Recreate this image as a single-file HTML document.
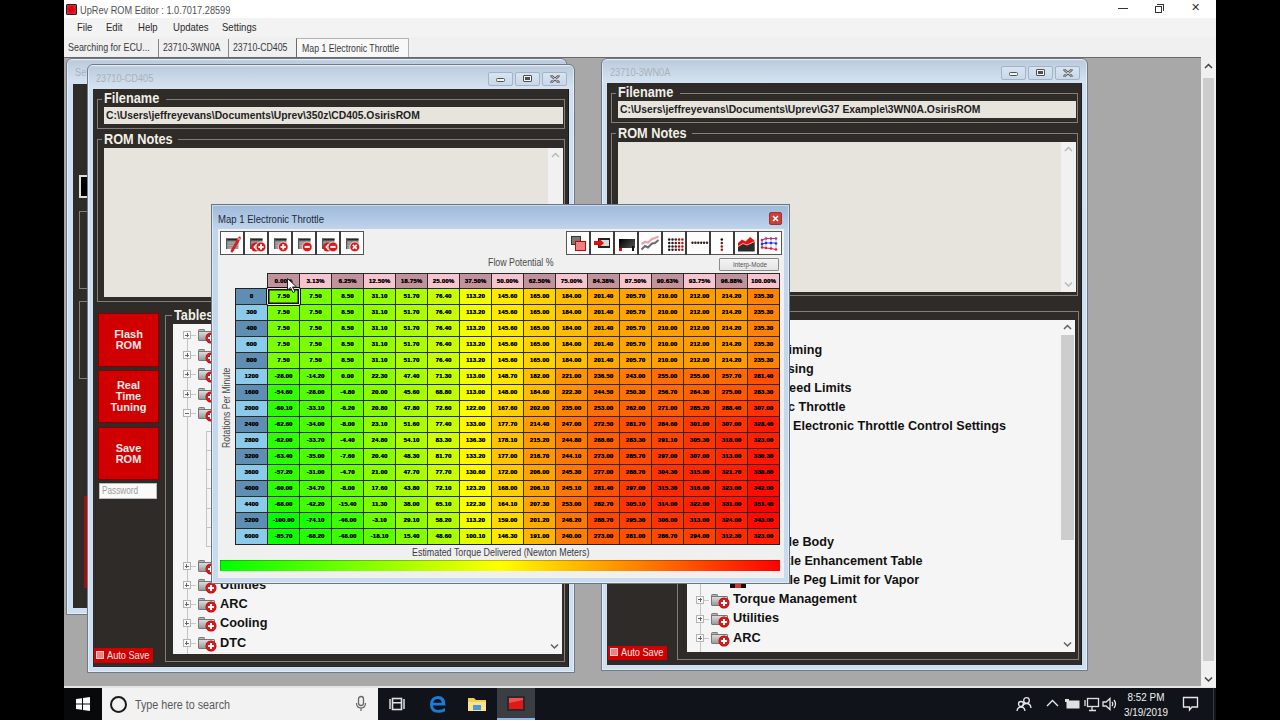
<!DOCTYPE html><html><head><meta charset="utf-8"><style>
*{margin:0;padding:0;box-sizing:border-box}
html,body{width:1280px;height:720px;overflow:hidden;background:#000;font-family:"Liberation Sans",sans-serif}
div{position:absolute}
.t{white-space:nowrap;line-height:1}
svg{display:block;position:absolute;left:0;top:0}
.c{width:33px;height:17px;border:1px solid #2a2a2a;font-size:6px;letter-spacing:.2px;font-weight:bold;color:#000;text-align:center;line-height:15px;white-space:nowrap;text-shadow:.3px 0 0 #000}
</style></head><body><div style="left:64px;top:0px;width:1152px;height:18px;background:#fff"></div>
<div style="left:64px;top:18px;width:1152px;height:19px;background:#f3f3f3"></div>
<div style="left:64px;top:37px;width:1152px;height:20px;background:#f0f0f0"></div>
<div style="left:66px;top:4px;width:11px;height:11px;background:radial-gradient(#e00010 30%,#d04050 100%);border:1.5px solid #222;border-radius:1px"></div>
<div class="t" style="left:80px;top:4.5px;font-size:11.5px;color:#505050;transform:scaleX(.80);transform-origin:0 0">UpRev ROM Editor : 1.0.7017.28599</div>
<div style="left:1118px;top:8px;width:10px;height:1px;background:#333"></div>
<div style="left:1155px;top:6px;width:7px;height:7px;border:1px solid #333"></div>
<div style="left:1157px;top:4px;width:7px;height:7px;border-top:1px solid #333;border-right:1px solid #333"></div>
<div class="t" style="left:1191px;top:2px;font-size:11px;color:#333">&#x2715;</div>
<div class="t" style="left:76.5px;top:22px;font-size:11.5px;color:#2a2a2a;transform:scaleX(.83);transform-origin:0 0">File</div>
<div class="t" style="left:106px;top:22px;font-size:11.5px;color:#2a2a2a;transform:scaleX(.83);transform-origin:0 0">Edit</div>
<div class="t" style="left:137.5px;top:22px;font-size:11.5px;color:#2a2a2a;transform:scaleX(.83);transform-origin:0 0">Help</div>
<div class="t" style="left:172.5px;top:22px;font-size:11.5px;color:#2a2a2a;transform:scaleX(.83);transform-origin:0 0">Updates</div>
<div class="t" style="left:222px;top:22px;font-size:11.5px;color:#2a2a2a;transform:scaleX(.83);transform-origin:0 0">Settings</div>
<div class="t" style="left:68px;top:42px;font-size:11.5px;color:#3a3a3a;transform:scaleX(.775);transform-origin:0 0">Searching for ECU...</div>
<div style="left:158px;top:39px;width:1px;height:18px;background:#888"></div>
<div class="t" style="left:162.5px;top:42px;font-size:11.5px;color:#3a3a3a;transform:scaleX(.76);transform-origin:0 0">23710-3WN0A</div>
<div style="left:228px;top:39px;width:1px;height:18px;background:#888"></div>
<div class="t" style="left:232.5px;top:42px;font-size:11.5px;color:#3a3a3a;transform:scaleX(.76);transform-origin:0 0">23710-CD405</div>
<div style="left:296px;top:37.5px;width:113px;height:20px;background:#f8f8f8;border:1px solid #b4b4b4;border-left:1.5px solid #6a6a6a;border-bottom:none"></div>
<div class="t" style="left:302px;top:43px;font-size:11.5px;color:#3a3a3a;transform:scaleX(.76);transform-origin:0 0">Map 1 Electronic Throttle</div>
<div style="left:64px;top:57px;width:1137px;height:630px;background:#a8a8a8;border-top:1px solid #6a6a6a"></div>
<div style="left:64px;top:687px;width:1152px;height:1px;background:#e8e8e8"></div>
<div style="left:1201px;top:57px;width:15px;height:630px;background:#f0f0f0"></div>
<div style="left:1203px;top:78px;width:11px;height:583px;background:#cdcdcd"></div>
<div style="left:1204px;top:63px;width:9px;height:7px"><svg width="9" height="7"><polyline points="1,5 4.5,1.5 8,5" fill="none" stroke="#404040" stroke-width="1.5"/></svg></div>
<div style="left:1204px;top:676px;width:9px;height:7px"><svg width="9" height="7"><polyline points="1,1.5 4.5,5 8,1.5" fill="none" stroke="#404040" stroke-width="1.5"/></svg></div>
<div style="left:66px;top:58px;width:501px;height:557px;background:linear-gradient(to bottom,#dbe4ee 0px,#bccbdd 2px,#c6d5e6 10px,#d5e3f1 24px,#cee0f1 26px,#cddff1 100%);border:1px solid #6e7a88;border-radius:6px 6px 0 0;box-shadow:inset 0 0 0 1px rgba(255,255,255,.45)"></div>
<div class="t" style="left:75px;top:68px;font-size:10px;color:#a9b1ba;transform:scaleX(.92);transform-origin:0 0">Se</div>
<div style="left:73px;top:84px;width:486px;height:524px;background:#2e2b28"></div>
<div style="left:79px;top:175px;width:20px;height:23px;background:#000;border:2px solid #ddd"></div>
<div style="left:79px;top:211px;width:30px;height:78px;border:1px solid #847e77"></div>
<div style="left:79px;top:301px;width:30px;height:78px;border:1px solid #847e77"></div>
<div style="left:84px;top:496px;width:4px;height:92px;background:#a01010"></div>
<div style="left:87px;top:64px;width:488px;height:609px;background:linear-gradient(to bottom,#dbe4ee 0px,#bccbdd 2px,#c6d5e6 10px,#d5e3f1 24px,#cee0f1 26px,#cddff1 100%);border:1px solid #6e7a88;border-radius:6px 6px 0 0;box-shadow:inset 0 0 0 1px rgba(255,255,255,.45)"></div>
<div class="t" style="left:96px;top:74px;font-size:10px;color:#a9b1ba;transform:scaleX(.92);transform-origin:0 0">23710-CD405</div>
<div style="left:488px;top:72px;width:25px;height:14px;border:1px solid #a4b4c6;border-radius:2px;background:linear-gradient(#d8e4f0,#c8d8ea)"></div>
<div style="left:515px;top:72px;width:25px;height:14px;border:1px solid #a4b4c6;border-radius:2px;background:linear-gradient(#d8e4f0,#c8d8ea)"></div>
<div style="left:542px;top:72px;width:25px;height:14px;border:1px solid #a4b4c6;border-radius:2px;background:linear-gradient(#d8e4f0,#c8d8ea)"></div>
<div style="left:496px;top:77.5px;width:9px;height:4.5px;border:1px solid #505050;border-radius:1.5px;background:#f4f4f4"></div>
<div style="left:523px;top:75px;width:9px;height:7px;border:1px solid #505050;border-radius:1px;background:#f4f4f4"></div>
<div style="left:525px;top:77px;width:5px;height:3px;background:#505050"></div>
<div style="left:549.5px;top:74.5px;width:10px;height:8px"><svg width="10" height="8"><path d="M1.5,1 L8.5,7 M8.5,1 L1.5,7" stroke="#5a5a5a" stroke-width="2.4" stroke-linecap="round"/><path d="M1.5,1 L8.5,7 M8.5,1 L1.5,7" stroke="#eeeeee" stroke-width="0.8" stroke-linecap="round"/></svg></div>
<div style="left:93px;top:89px;width:476px;height:578px;background:#2e2b28;border-right:1px solid #1c1a18"></div>
<div style="left:97px;top:99px;width:468px;height:30px;border:1px solid #847e77"></div>
<div style="left:102px;top:91px;width:64px;height:14px;background:#2e2b28"></div>
<div class="t" style="left:104px;top:91px;font-size:14px;font-weight:bold;color:#f2efe6;transform:scaleX(.91);transform-origin:0 0">Filename</div>
<div style="left:104px;top:107px;width:459px;height:17px;background:#e6e4dc"></div>
<div class="t" style="left:106px;top:110px;font-size:11px;font-weight:bold;color:#222;transform:scaleX(.94);transform-origin:0 0">C:\Users\jeffreyevans\Documents\Uprev\350z\CD405.OsirisROM</div>
<div style="left:97px;top:139px;width:468px;height:163px;border:1px solid #847e77"></div>
<div style="left:102px;top:131px;width:76px;height:14px;background:#2e2b28"></div>
<div class="t" style="left:104px;top:132px;font-size:14px;font-weight:bold;color:#f2efe6;transform:scaleX(.91);transform-origin:0 0">ROM Notes</div>
<div style="left:104px;top:148px;width:459px;height:149px;background:#e6e4dc"></div>
<div style="left:548px;top:148px;width:15px;height:149px;background:#f1f1f1"></div>
<div style="left:551px;top:152px;width:9px;height:7px"><svg width="9" height="7"><polyline points="1,5 4.5,1.5 8,5" fill="none" stroke="#b8b8b8" stroke-width="1.5"/></svg></div>
<div style="left:551px;top:286px;width:9px;height:7px"><svg width="9" height="7"><polyline points="1,1.5 4.5,5 8,1.5" fill="none" stroke="#b8b8b8" stroke-width="1.5"/></svg></div>
<div style="left:98px;top:313px;width:61px;height:54px;background:#d10000;border:1px solid #8a0000"></div>
<div class="t" style="left:98px;top:329.0px;width:61px;text-align:center;font-size:11px;font-weight:bold;color:#f4e8e8">Flash</div>
<div class="t" style="left:98px;top:340.0px;width:61px;text-align:center;font-size:11px;font-weight:bold;color:#f4e8e8">ROM</div>
<div style="left:98px;top:370px;width:61px;height:53px;background:#d10000;border:1px solid #8a0000"></div>
<div class="t" style="left:98px;top:380.0px;width:61px;text-align:center;font-size:11px;font-weight:bold;color:#f4e8e8">Real</div>
<div class="t" style="left:98px;top:391.0px;width:61px;text-align:center;font-size:11px;font-weight:bold;color:#f4e8e8">Time</div>
<div class="t" style="left:98px;top:402.0px;width:61px;text-align:center;font-size:11px;font-weight:bold;color:#f4e8e8">Tuning</div>
<div style="left:98px;top:427px;width:61px;height:53px;background:#d10000;border:1px solid #8a0000"></div>
<div class="t" style="left:98px;top:442.5px;width:61px;text-align:center;font-size:11px;font-weight:bold;color:#f4e8e8">Save</div>
<div class="t" style="left:98px;top:453.5px;width:61px;text-align:center;font-size:11px;font-weight:bold;color:#f4e8e8">ROM</div>
<div style="left:99px;top:483px;width:58px;height:16px;background:#fafafa;border:1px solid #bbb"></div>
<div class="t" style="left:102px;top:486px;font-size:10px;color:#9a9a9a;transform:scaleX(.82);transform-origin:0 0">Password</div>
<div style="left:94px;top:648px;width:59px;height:15px;background:#d10000"></div>
<div style="left:96px;top:651px;width:8px;height:8px;background:#f08080;border:1px solid #fcc"></div>
<div class="t" style="left:107px;top:649.5px;font-size:11.5px;color:#f6e6e6;transform:scaleX(.80);transform-origin:0 0">Auto Save</div>
<div style="left:165px;top:315px;width:400px;height:347px;border:1px solid #847e77"></div>
<div style="left:172px;top:307px;width:48px;height:14px;background:#2e2b28"></div>
<div class="t" style="left:174px;top:308px;font-size:14px;font-weight:bold;color:#f2efe6;transform:scaleX(.91);transform-origin:0 0">Tables</div>
<div style="left:173px;top:324px;width:388px;height:330px;background:#f5f5f5"></div>
<div style="left:547px;top:324px;width:15px;height:330px;background:#f5f5f5"></div>
<div style="left:550px;top:328px;width:9px;height:7px"><svg width="9" height="7"><polyline points="1,5 4.5,1.5 8,5" fill="none" stroke="#606060" stroke-width="1.5"/></svg></div>
<div style="left:550px;top:643px;width:9px;height:7px"><svg width="9" height="7"><polyline points="1,1.5 4.5,5 8,1.5" fill="none" stroke="#606060" stroke-width="1.5"/></svg></div>
<div style="left:187px;top:335px;width:1px;height:319px;background:#c4c4c4"></div>
<div style="left:206px;top:431px;width:1px;height:116px;background:#c4c4c4"></div>
<div style="left:206px;top:431px;width:7px;height:1px;background:#c4c4c4"></div>
<div style="left:206px;top:450px;width:7px;height:1px;background:#c4c4c4"></div>
<div style="left:206px;top:469px;width:7px;height:1px;background:#c4c4c4"></div>
<div style="left:206px;top:488px;width:7px;height:1px;background:#c4c4c4"></div>
<div style="left:206px;top:508px;width:7px;height:1px;background:#c4c4c4"></div>
<div style="left:206px;top:527px;width:7px;height:1px;background:#c4c4c4"></div>
<div style="left:206px;top:546px;width:7px;height:1px;background:#c4c4c4"></div>
<div style="left:183px;top:331px;width:8px;height:8px;border:1px solid #b4b4b4;background:#f8f8f8"></div>
<div style="left:185px;top:334.5px;width:4px;height:1px;background:#666"></div>
<div style="left:186.5px;top:333px;width:1px;height:4px;background:#666"></div>
<div style="left:191px;top:335px;width:5px;height:1px;background:#c8c8c8"></div>
<div style="left:198px;top:329px;width:7px;height:3px;background:#b8b8b8;border:1px solid #7a7a7a;border-bottom:none;border-radius:2px 2px 0 0"></div>
<div style="left:198px;top:331px;width:17px;height:10px;background:linear-gradient(#dcdcdc,#9a9a9a);border:1px solid #777;border-radius:1px"></div>
<div style="left:206px;top:333px;width:10px;height:10px;background:#d81c1c;border-radius:50%;box-shadow:0 0 0 .5px #a00"></div>
<div style="left:210px;top:335px;width:2px;height:6px;background:#fff"></div>
<div style="left:208px;top:337px;width:6px;height:2px;background:#fff"></div>
<div style="left:183px;top:351px;width:8px;height:8px;border:1px solid #b4b4b4;background:#f8f8f8"></div>
<div style="left:185px;top:354.5px;width:4px;height:1px;background:#666"></div>
<div style="left:186.5px;top:353px;width:1px;height:4px;background:#666"></div>
<div style="left:191px;top:355px;width:5px;height:1px;background:#c8c8c8"></div>
<div style="left:198px;top:349px;width:7px;height:3px;background:#b8b8b8;border:1px solid #7a7a7a;border-bottom:none;border-radius:2px 2px 0 0"></div>
<div style="left:198px;top:351px;width:17px;height:10px;background:linear-gradient(#dcdcdc,#9a9a9a);border:1px solid #777;border-radius:1px"></div>
<div style="left:206px;top:353px;width:10px;height:10px;background:#d81c1c;border-radius:50%;box-shadow:0 0 0 .5px #a00"></div>
<div style="left:210px;top:355px;width:2px;height:6px;background:#fff"></div>
<div style="left:208px;top:357px;width:6px;height:2px;background:#fff"></div>
<div style="left:183px;top:370px;width:8px;height:8px;border:1px solid #b4b4b4;background:#f8f8f8"></div>
<div style="left:185px;top:373.5px;width:4px;height:1px;background:#666"></div>
<div style="left:186.5px;top:372px;width:1px;height:4px;background:#666"></div>
<div style="left:191px;top:374px;width:5px;height:1px;background:#c8c8c8"></div>
<div style="left:198px;top:368px;width:7px;height:3px;background:#b8b8b8;border:1px solid #7a7a7a;border-bottom:none;border-radius:2px 2px 0 0"></div>
<div style="left:198px;top:370px;width:17px;height:10px;background:linear-gradient(#dcdcdc,#9a9a9a);border:1px solid #777;border-radius:1px"></div>
<div style="left:206px;top:372px;width:10px;height:10px;background:#d81c1c;border-radius:50%;box-shadow:0 0 0 .5px #a00"></div>
<div style="left:210px;top:374px;width:2px;height:6px;background:#fff"></div>
<div style="left:208px;top:376px;width:6px;height:2px;background:#fff"></div>
<div style="left:183px;top:390px;width:8px;height:8px;border:1px solid #b4b4b4;background:#f8f8f8"></div>
<div style="left:185px;top:393.5px;width:4px;height:1px;background:#666"></div>
<div style="left:186.5px;top:392px;width:1px;height:4px;background:#666"></div>
<div style="left:191px;top:394px;width:5px;height:1px;background:#c8c8c8"></div>
<div style="left:198px;top:388px;width:7px;height:3px;background:#b8b8b8;border:1px solid #7a7a7a;border-bottom:none;border-radius:2px 2px 0 0"></div>
<div style="left:198px;top:390px;width:17px;height:10px;background:linear-gradient(#dcdcdc,#9a9a9a);border:1px solid #777;border-radius:1px"></div>
<div style="left:206px;top:392px;width:10px;height:10px;background:#d81c1c;border-radius:50%;box-shadow:0 0 0 .5px #a00"></div>
<div style="left:210px;top:394px;width:2px;height:6px;background:#fff"></div>
<div style="left:208px;top:396px;width:6px;height:2px;background:#fff"></div>
<div style="left:183px;top:409px;width:8px;height:8px;border:1px solid #b4b4b4;background:#f8f8f8"></div>
<div style="left:185px;top:412.5px;width:4px;height:1px;background:#666"></div>
<div style="left:191px;top:413px;width:5px;height:1px;background:#c8c8c8"></div>
<div style="left:198px;top:407px;width:7px;height:3px;background:#b8b8b8;border:1px solid #7a7a7a;border-bottom:none;border-radius:2px 2px 0 0"></div>
<div style="left:198px;top:409px;width:17px;height:10px;background:linear-gradient(#dcdcdc,#9a9a9a);border:1px solid #777;border-radius:1px"></div>
<div style="left:206px;top:411px;width:10px;height:10px;background:#d81c1c;border-radius:50%;box-shadow:0 0 0 .5px #a00"></div>
<div style="left:210px;top:413px;width:2px;height:6px;background:#fff"></div>
<div style="left:208px;top:415px;width:6px;height:2px;background:#fff"></div>
<div style="left:182.5px;top:562px;width:8px;height:8px;border:1px solid #b4b4b4;background:#f8f8f8"></div>
<div style="left:184.5px;top:565.5px;width:4px;height:1px;background:#666"></div>
<div style="left:186.0px;top:564px;width:1px;height:4px;background:#666"></div>
<div style="left:190.5px;top:566px;width:5px;height:1px;background:#c8c8c8"></div>
<div style="left:197.5px;top:560px;width:7px;height:3px;background:#b8b8b8;border:1px solid #7a7a7a;border-bottom:none;border-radius:2px 2px 0 0"></div>
<div style="left:197.5px;top:562px;width:17px;height:10px;background:linear-gradient(#dcdcdc,#9a9a9a);border:1px solid #777;border-radius:1px"></div>
<div style="left:205.5px;top:564px;width:10px;height:10px;background:#d81c1c;border-radius:50%;box-shadow:0 0 0 .5px #a00"></div>
<div style="left:209.5px;top:566px;width:2px;height:6px;background:#fff"></div>
<div style="left:207.5px;top:568px;width:6px;height:2px;background:#fff"></div>
<div class="t" style="left:219.5px;top:558.5px;font-size:13px;font-weight:bold;color:#111;transform:scaleX(.98);transform-origin:0 0">Torque Management</div>
<div style="left:182.5px;top:581px;width:8px;height:8px;border:1px solid #b4b4b4;background:#f8f8f8"></div>
<div style="left:184.5px;top:584.5px;width:4px;height:1px;background:#666"></div>
<div style="left:186.0px;top:583px;width:1px;height:4px;background:#666"></div>
<div style="left:190.5px;top:585px;width:5px;height:1px;background:#c8c8c8"></div>
<div style="left:197.5px;top:579px;width:7px;height:3px;background:#b8b8b8;border:1px solid #7a7a7a;border-bottom:none;border-radius:2px 2px 0 0"></div>
<div style="left:197.5px;top:581px;width:17px;height:10px;background:linear-gradient(#dcdcdc,#9a9a9a);border:1px solid #777;border-radius:1px"></div>
<div style="left:205.5px;top:583px;width:10px;height:10px;background:#d81c1c;border-radius:50%;box-shadow:0 0 0 .5px #a00"></div>
<div style="left:209.5px;top:585px;width:2px;height:6px;background:#fff"></div>
<div style="left:207.5px;top:587px;width:6px;height:2px;background:#fff"></div>
<div class="t" style="left:219.5px;top:577.5px;font-size:13px;font-weight:bold;color:#111;transform:scaleX(.98);transform-origin:0 0">Utilities</div>
<div style="left:182.5px;top:600px;width:8px;height:8px;border:1px solid #b4b4b4;background:#f8f8f8"></div>
<div style="left:184.5px;top:603.5px;width:4px;height:1px;background:#666"></div>
<div style="left:186.0px;top:602px;width:1px;height:4px;background:#666"></div>
<div style="left:190.5px;top:604px;width:5px;height:1px;background:#c8c8c8"></div>
<div style="left:197.5px;top:598px;width:7px;height:3px;background:#b8b8b8;border:1px solid #7a7a7a;border-bottom:none;border-radius:2px 2px 0 0"></div>
<div style="left:197.5px;top:600px;width:17px;height:10px;background:linear-gradient(#dcdcdc,#9a9a9a);border:1px solid #777;border-radius:1px"></div>
<div style="left:205.5px;top:602px;width:10px;height:10px;background:#d81c1c;border-radius:50%;box-shadow:0 0 0 .5px #a00"></div>
<div style="left:209.5px;top:604px;width:2px;height:6px;background:#fff"></div>
<div style="left:207.5px;top:606px;width:6px;height:2px;background:#fff"></div>
<div class="t" style="left:219.5px;top:596.5px;font-size:13px;font-weight:bold;color:#111;transform:scaleX(.98);transform-origin:0 0">ARC</div>
<div style="left:182.5px;top:619px;width:8px;height:8px;border:1px solid #b4b4b4;background:#f8f8f8"></div>
<div style="left:184.5px;top:622.5px;width:4px;height:1px;background:#666"></div>
<div style="left:186.0px;top:621px;width:1px;height:4px;background:#666"></div>
<div style="left:190.5px;top:623px;width:5px;height:1px;background:#c8c8c8"></div>
<div style="left:197.5px;top:617px;width:7px;height:3px;background:#b8b8b8;border:1px solid #7a7a7a;border-bottom:none;border-radius:2px 2px 0 0"></div>
<div style="left:197.5px;top:619px;width:17px;height:10px;background:linear-gradient(#dcdcdc,#9a9a9a);border:1px solid #777;border-radius:1px"></div>
<div style="left:205.5px;top:621px;width:10px;height:10px;background:#d81c1c;border-radius:50%;box-shadow:0 0 0 .5px #a00"></div>
<div style="left:209.5px;top:623px;width:2px;height:6px;background:#fff"></div>
<div style="left:207.5px;top:625px;width:6px;height:2px;background:#fff"></div>
<div class="t" style="left:219.5px;top:615.5px;font-size:13px;font-weight:bold;color:#111;transform:scaleX(.98);transform-origin:0 0">Cooling</div>
<div style="left:182.5px;top:639px;width:8px;height:8px;border:1px solid #b4b4b4;background:#f8f8f8"></div>
<div style="left:184.5px;top:642.5px;width:4px;height:1px;background:#666"></div>
<div style="left:186.0px;top:641px;width:1px;height:4px;background:#666"></div>
<div style="left:190.5px;top:643px;width:5px;height:1px;background:#c8c8c8"></div>
<div style="left:197.5px;top:637px;width:7px;height:3px;background:#b8b8b8;border:1px solid #7a7a7a;border-bottom:none;border-radius:2px 2px 0 0"></div>
<div style="left:197.5px;top:639px;width:17px;height:10px;background:linear-gradient(#dcdcdc,#9a9a9a);border:1px solid #777;border-radius:1px"></div>
<div style="left:205.5px;top:641px;width:10px;height:10px;background:#d81c1c;border-radius:50%;box-shadow:0 0 0 .5px #a00"></div>
<div style="left:209.5px;top:643px;width:2px;height:6px;background:#fff"></div>
<div style="left:207.5px;top:645px;width:6px;height:2px;background:#fff"></div>
<div class="t" style="left:219.5px;top:635.5px;font-size:13px;font-weight:bold;color:#111;transform:scaleX(.98);transform-origin:0 0">DTC</div>
<div style="left:601px;top:58px;width:487px;height:613px;background:linear-gradient(to bottom,#dbe4ee 0px,#bccbdd 2px,#c6d5e6 10px,#d5e3f1 24px,#cee0f1 26px,#cddff1 100%);border:1px solid #6e7a88;border-radius:6px 6px 0 0;box-shadow:inset 0 0 0 1px rgba(255,255,255,.45)"></div>
<div class="t" style="left:610px;top:68px;font-size:10px;color:#a9b1ba;transform:scaleX(.92);transform-origin:0 0">23710-3WN0A</div>
<div style="left:1001px;top:66px;width:25px;height:14px;border:1px solid #a4b4c6;border-radius:2px;background:linear-gradient(#d8e4f0,#c8d8ea)"></div>
<div style="left:1028px;top:66px;width:25px;height:14px;border:1px solid #a4b4c6;border-radius:2px;background:linear-gradient(#d8e4f0,#c8d8ea)"></div>
<div style="left:1055px;top:66px;width:25px;height:14px;border:1px solid #a4b4c6;border-radius:2px;background:linear-gradient(#d8e4f0,#c8d8ea)"></div>
<div style="left:1009px;top:71.5px;width:9px;height:4.5px;border:1px solid #505050;border-radius:1.5px;background:#f4f4f4"></div>
<div style="left:1036px;top:69px;width:9px;height:7px;border:1px solid #505050;border-radius:1px;background:#f4f4f4"></div>
<div style="left:1038px;top:71px;width:5px;height:3px;background:#505050"></div>
<div style="left:1062.5px;top:68.5px;width:10px;height:8px"><svg width="10" height="8"><path d="M1.5,1 L8.5,7 M8.5,1 L1.5,7" stroke="#5a5a5a" stroke-width="2.4" stroke-linecap="round"/><path d="M1.5,1 L8.5,7 M8.5,1 L1.5,7" stroke="#eeeeee" stroke-width="0.8" stroke-linecap="round"/></svg></div>
<div style="left:607px;top:83px;width:475px;height:582px;background:#2e2b28;border-right:1px solid #1c1a18"></div>
<div style="left:611px;top:93px;width:467px;height:30px;border:1px solid #847e77"></div>
<div style="left:616px;top:85px;width:64px;height:14px;background:#2e2b28"></div>
<div class="t" style="left:618px;top:85px;font-size:14px;font-weight:bold;color:#f2efe6;transform:scaleX(.91);transform-origin:0 0">Filename</div>
<div style="left:618px;top:101px;width:458px;height:17px;background:#e6e4dc"></div>
<div class="t" style="left:620px;top:104px;font-size:11px;font-weight:bold;color:#222;transform:scaleX(.94);transform-origin:0 0">C:\Users\jeffreyevans\Documents\Uprev\G37 Example\3WN0A.OsirisROM</div>
<div style="left:611px;top:133px;width:467px;height:163px;border:1px solid #847e77"></div>
<div style="left:616px;top:125px;width:76px;height:14px;background:#2e2b28"></div>
<div class="t" style="left:618px;top:126px;font-size:14px;font-weight:bold;color:#f2efe6;transform:scaleX(.91);transform-origin:0 0">ROM Notes</div>
<div style="left:618px;top:142px;width:458px;height:150px;background:#e6e4dc"></div>
<div style="left:1061px;top:142px;width:15px;height:150px;background:#f1f1f1"></div>
<div style="left:1064px;top:146px;width:9px;height:7px"><svg width="9" height="7"><polyline points="1,5 4.5,1.5 8,5" fill="none" stroke="#b8b8b8" stroke-width="1.5"/></svg></div>
<div style="left:1064px;top:281px;width:9px;height:7px"><svg width="9" height="7"><polyline points="1,1.5 4.5,5 8,1.5" fill="none" stroke="#b8b8b8" stroke-width="1.5"/></svg></div>
<div style="left:608px;top:646px;width:59px;height:14px;background:#d10000"></div>
<div style="left:610px;top:648px;width:8px;height:8px;background:#f08080;border:1px solid #fcc"></div>
<div class="t" style="left:621px;top:646.5px;font-size:11.5px;color:#f6e6e6;transform:scaleX(.80);transform-origin:0 0">Auto Save</div>
<div style="left:677px;top:311px;width:402px;height:349px;border:1px solid #847e77"></div>
<div style="left:687px;top:320px;width:387px;height:332px;background:#f5f5f5"></div>
<div style="left:1060px;top:320px;width:15px;height:332px;background:#f5f5f5"></div>
<div style="left:1063px;top:324px;width:9px;height:7px"><svg width="9" height="7"><polyline points="1,5 4.5,1.5 8,5" fill="none" stroke="#606060" stroke-width="1.5"/></svg></div>
<div style="left:1063px;top:641px;width:9px;height:7px"><svg width="9" height="7"><polyline points="1,1.5 4.5,5 8,1.5" fill="none" stroke="#606060" stroke-width="1.5"/></svg></div>
<div style="left:1061px;top:335px;width:13px;height:205px;background:#cdcdcd"></div>
<div style="left:700px;top:330px;width:1px;height:322px;background:#c4c4c4"></div>
<div class="t" style="left:731.87px;top:342.75px;font-size:13px;font-weight:bold;color:#111;transform:scaleX(0.97);transform-origin:0 0">Ignition Timing</div>
<div class="t" style="left:731.33px;top:361.75px;font-size:13px;font-weight:bold;color:#111;transform:scaleX(0.97);transform-origin:0 0">Load Sensing</div>
<div class="t" style="left:772.52px;top:380.75px;font-size:13px;font-weight:bold;color:#111;transform:scaleX(0.97);transform-origin:0 0">Speed Limits</div>
<div class="t" style="left:733.6px;top:399.75px;font-size:13px;font-weight:bold;color:#111;transform:scaleX(0.97);transform-origin:0 0">Electronic Throttle</div>
<div class="t" style="left:793.02px;top:418.75px;font-size:13px;font-weight:bold;color:#111;transform:scaleX(0.97);transform-origin:0 0">Electronic Throttle Control Settings</div>
<div class="t" style="left:752.04px;top:534.75px;font-size:13px;font-weight:bold;color:#111;transform:scaleX(0.97);transform-origin:0 0">Throttle Body</div>
<div class="t" style="left:754.38px;top:553.75px;font-size:13px;font-weight:bold;color:#111;transform:scaleX(0.97);transform-origin:0 0">Throttle Enhancement Table</div>
<div class="t" style="left:752.95px;top:572.75px;font-size:13px;font-weight:bold;color:#111;transform:scaleX(0.97);transform-origin:0 0">Throttle Peg Limit for Vapor</div>
<div style="left:696px;top:595.5px;width:8px;height:8px;border:1px solid #b4b4b4;background:#f8f8f8"></div>
<div style="left:698px;top:599.0px;width:4px;height:1px;background:#666"></div>
<div style="left:699.5px;top:597.5px;width:1px;height:4px;background:#666"></div>
<div style="left:704px;top:599.5px;width:5px;height:1px;background:#c8c8c8"></div>
<div style="left:711px;top:593.5px;width:7px;height:3px;background:#b8b8b8;border:1px solid #7a7a7a;border-bottom:none;border-radius:2px 2px 0 0"></div>
<div style="left:711px;top:595.5px;width:17px;height:10px;background:linear-gradient(#dcdcdc,#9a9a9a);border:1px solid #777;border-radius:1px"></div>
<div style="left:719px;top:597.5px;width:10px;height:10px;background:#d81c1c;border-radius:50%;box-shadow:0 0 0 .5px #a00"></div>
<div style="left:723px;top:599.5px;width:2px;height:6px;background:#fff"></div>
<div style="left:721px;top:601.5px;width:6px;height:2px;background:#fff"></div>
<div class="t" style="left:733px;top:592.0px;font-size:13px;font-weight:bold;color:#111;transform:scaleX(.98);transform-origin:0 0">Torque Management</div>
<div style="left:696px;top:614.5px;width:8px;height:8px;border:1px solid #b4b4b4;background:#f8f8f8"></div>
<div style="left:698px;top:618.0px;width:4px;height:1px;background:#666"></div>
<div style="left:699.5px;top:616.5px;width:1px;height:4px;background:#666"></div>
<div style="left:704px;top:618.5px;width:5px;height:1px;background:#c8c8c8"></div>
<div style="left:711px;top:612.5px;width:7px;height:3px;background:#b8b8b8;border:1px solid #7a7a7a;border-bottom:none;border-radius:2px 2px 0 0"></div>
<div style="left:711px;top:614.5px;width:17px;height:10px;background:linear-gradient(#dcdcdc,#9a9a9a);border:1px solid #777;border-radius:1px"></div>
<div style="left:719px;top:616.5px;width:10px;height:10px;background:#d81c1c;border-radius:50%;box-shadow:0 0 0 .5px #a00"></div>
<div style="left:723px;top:618.5px;width:2px;height:6px;background:#fff"></div>
<div style="left:721px;top:620.5px;width:6px;height:2px;background:#fff"></div>
<div class="t" style="left:733px;top:611.0px;font-size:13px;font-weight:bold;color:#111;transform:scaleX(.98);transform-origin:0 0">Utilities</div>
<div style="left:696px;top:634px;width:8px;height:8px;border:1px solid #b4b4b4;background:#f8f8f8"></div>
<div style="left:698px;top:637.5px;width:4px;height:1px;background:#666"></div>
<div style="left:699.5px;top:636px;width:1px;height:4px;background:#666"></div>
<div style="left:704px;top:638px;width:5px;height:1px;background:#c8c8c8"></div>
<div style="left:711px;top:632px;width:7px;height:3px;background:#b8b8b8;border:1px solid #7a7a7a;border-bottom:none;border-radius:2px 2px 0 0"></div>
<div style="left:711px;top:634px;width:17px;height:10px;background:linear-gradient(#dcdcdc,#9a9a9a);border:1px solid #777;border-radius:1px"></div>
<div style="left:719px;top:636px;width:10px;height:10px;background:#d81c1c;border-radius:50%;box-shadow:0 0 0 .5px #a00"></div>
<div style="left:723px;top:638px;width:2px;height:6px;background:#fff"></div>
<div style="left:721px;top:640px;width:6px;height:2px;background:#fff"></div>
<div class="t" style="left:733px;top:630.5px;font-size:13px;font-weight:bold;color:#111;transform:scaleX(.98);transform-origin:0 0">ARC</div>
<div style="left:730px;top:583px;width:16px;height:5px;background:linear-gradient(90deg,#111 0 33%,#d33 33% 66%,#111 66%)"></div>
<div style="left:211px;top:204px;width:579px;height:380px;background:linear-gradient(to bottom,#9fbadb 0px,#aec6e3 12px,#c1d6ec 25px,#c8dbef 100%);border:1px solid #6c7680;box-shadow:inset 0 0 0 1px rgba(255,255,255,.45)"></div>
<div class="t" style="left:217.5px;top:215px;font-size:10px;color:#1e2a3a;transform:scaleX(.955);transform-origin:0 0">Map 1 Electronic Throttle</div>
<div style="left:769px;top:212px;width:13px;height:13px;background:#c8403a;border:1px solid #a83028;border-radius:2px"></div>
<div style="left:772px;top:215px;width:7px;height:7px"><svg width="7" height="7"><path d="M1,1 L6,6 M6,1 L1,6" stroke="#fff" stroke-width="1.6"/></svg></div>
<div style="left:218px;top:229px;width:566px;height:349px;background:#f0f0f0"></div>
<div style="left:220px;top:231px;width:144px;height:24px;background:#fdfdfd;border:1px solid #555"></div>
<div style="left:243px;top:231px;width:2px;height:24px;background:#3c3c3c"></div>
<div style="left:267px;top:231px;width:2px;height:24px;background:#3c3c3c"></div>
<div style="left:291px;top:231px;width:2px;height:24px;background:#3c3c3c"></div>
<div style="left:315px;top:231px;width:2px;height:24px;background:#3c3c3c"></div>
<div style="left:339px;top:231px;width:2px;height:24px;background:#3c3c3c"></div>
<div style="left:566px;top:231px;width:216px;height:24px;background:#fdfdfd;border:1px solid #555"></div>
<div style="left:589px;top:231px;width:2px;height:24px;background:#3c3c3c"></div>
<div style="left:613px;top:231px;width:2px;height:24px;background:#3c3c3c"></div>
<div style="left:637px;top:231px;width:2px;height:24px;background:#3c3c3c"></div>
<div style="left:661px;top:231px;width:2px;height:24px;background:#3c3c3c"></div>
<div style="left:685px;top:231px;width:2px;height:24px;background:#3c3c3c"></div>
<div style="left:709px;top:231px;width:2px;height:24px;background:#3c3c3c"></div>
<div style="left:733px;top:231px;width:2px;height:24px;background:#3c3c3c"></div>
<div style="left:757px;top:231px;width:2px;height:24px;background:#3c3c3c"></div>
<div style="left:220px;top:231px;width:24px;height:24px"><svg width="24" height="24"><rect x="6" y="7.5" width="12.5" height="10.5" fill="#8e8e8e"/><rect x="6" y="7.5" width="12.5" height="2" fill="#262626"/><path d="M7,12 H18 M7,14.5 H18 M7,17 H18" stroke="#b8b8b8" stroke-width=".8"/><rect x="6" y="7.5" width="1.2" height="10.5" fill="#555"/><path d="M19.5,7 L12,20" stroke="#d42020" stroke-width="2.8" stroke-linecap="round"/><path d="M19.5,7 L18.3,9" stroke="#f08080" stroke-width="2.8"/></svg></div>
<div style="left:244px;top:231px;width:24px;height:24px"><svg width="24" height="24"><rect x="6" y="7.5" width="12.5" height="10.5" fill="#8e8e8e"/><rect x="6" y="7.5" width="12.5" height="2" fill="#262626"/><path d="M7,12 H18 M7,14.5 H18 M7,17 H18" stroke="#b8b8b8" stroke-width=".8"/><rect x="6" y="7.5" width="1.2" height="10.5" fill="#555"/><circle cx="11.5" cy="16" r="4.6" fill="#d61a1a"/><path d="M13,13 L10.2,16 L13,19" fill="none" stroke="#fff" stroke-width="1.4"/><circle cx="17" cy="15.9" r="4.9" fill="#d61a1a" stroke="#fff" stroke-width=".7"/><path d="M14.4,15.9 H19.6 M17,13.3 V18.5" stroke="#fff" stroke-width="2"/></svg></div>
<div style="left:268px;top:231px;width:24px;height:24px"><svg width="24" height="24"><rect x="6" y="7.5" width="12.5" height="10.5" fill="#8e8e8e"/><rect x="6" y="7.5" width="12.5" height="2" fill="#262626"/><path d="M7,12 H18 M7,14.5 H18 M7,17 H18" stroke="#b8b8b8" stroke-width=".8"/><rect x="6" y="7.5" width="1.2" height="10.5" fill="#555"/><circle cx="15.2" cy="15.9" r="4.9" fill="#d61a1a" stroke="#fff" stroke-width=".7"/><path d="M12.6,15.9 H17.8 M15.2,13.3 V18.5" stroke="#fff" stroke-width="2"/></svg></div>
<div style="left:292px;top:231px;width:24px;height:24px"><svg width="24" height="24"><rect x="6" y="7.5" width="12.5" height="10.5" fill="#8e8e8e"/><rect x="6" y="7.5" width="12.5" height="2" fill="#262626"/><path d="M7,12 H18 M7,14.5 H18 M7,17 H18" stroke="#b8b8b8" stroke-width=".8"/><rect x="6" y="7.5" width="1.2" height="10.5" fill="#555"/><circle cx="15.2" cy="15.9" r="4.9" fill="#d61a1a" stroke="#fff" stroke-width=".7"/><path d="M12.6,15.9 H17.8" stroke="#fff" stroke-width="2"/></svg></div>
<div style="left:316px;top:231px;width:24px;height:24px"><svg width="24" height="24"><rect x="6" y="7.5" width="12.5" height="10.5" fill="#8e8e8e"/><rect x="6" y="7.5" width="12.5" height="2" fill="#262626"/><path d="M7,12 H18 M7,14.5 H18 M7,17 H18" stroke="#b8b8b8" stroke-width=".8"/><rect x="6" y="7.5" width="1.2" height="10.5" fill="#555"/><circle cx="11.5" cy="16" r="4.6" fill="#d61a1a"/><path d="M13,13 L10.2,16 L13,19" fill="none" stroke="#fff" stroke-width="1.4"/><circle cx="17" cy="15.9" r="4.9" fill="#d61a1a" stroke="#fff" stroke-width=".7"/><path d="M14.4,15.9 H19.6" stroke="#fff" stroke-width="2"/></svg></div>
<div style="left:340px;top:231px;width:24px;height:24px"><svg width="24" height="24"><rect x="6" y="7.5" width="12.5" height="10.5" fill="#8e8e8e"/><rect x="6" y="7.5" width="12.5" height="2" fill="#262626"/><path d="M7,12 H18 M7,14.5 H18 M7,17 H18" stroke="#b8b8b8" stroke-width=".8"/><rect x="6" y="7.5" width="1.2" height="10.5" fill="#555"/><circle cx="14.8" cy="15.9" r="4.9" fill="#d61a1a" stroke="#fff" stroke-width=".7"/><path d="M12.8,13.9 L16.8,17.9 M16.8,13.9 L12.8,17.9" stroke="#fff" stroke-width="1.8"/></svg></div>
<div style="left:571px;top:236px;width:10px;height:9px;background:#777;border:1px solid #333"></div>
<div style="left:575px;top:241px;width:11px;height:10px;background:#f08080;border:1px solid #c00"></div>
<div style="left:598px;top:238px;width:12px;height:10px;background:#d8d8d8;border:1px solid #222;border-top-width:2px;border-bottom-width:2px"></div>
<div style="left:593px;top:238px;width:12px;height:10px"><svg width="12" height="10"><path d="M1,3 H6 V0.5 L11,5 L6,9.5 V7 H1 Z" fill="#e01010"/></svg></div>
<div style="left:619px;top:239px;width:16px;height:9px;background:linear-gradient(135deg,#000 0%,#555 100%)"></div>
<div style="left:619px;top:248px;width:3px;height:3px;background:#d01010"></div>
<div style="left:632px;top:246px;width:2px;height:5px;background:#111"></div>
<div style="left:640px;top:234px;width:20px;height:18px"><svg width="20" height="18"><polyline points="1.5,10 5,8 8,8.5 12,5 15,4 18.5,2.5" fill="none" stroke="#f0a0a8" stroke-width="2.2"/><polyline points="1.5,15.5 5,12 8,13.5 12,9.5 15,9 18.5,6" fill="none" stroke="#6a6a6a" stroke-width="2"/></svg></div>
<div style="left:662px;top:231px;width:24px;height:24px"><svg width="24" height="24"><circle cx="7.2" cy="8.6" r="1.25" fill="#1a1a1a"/><circle cx="10.5" cy="8.6" r="1.25" fill="#2a1a1a"/><circle cx="13.8" cy="8.6" r="1.25" fill="#5a1818"/><circle cx="17.099999999999998" cy="8.6" r="1.25" fill="#901818"/><circle cx="20.4" cy="8.6" r="1.25" fill="#b01c1c"/><circle cx="7.2" cy="12.0" r="1.25" fill="#1a1a1a"/><circle cx="10.5" cy="12.0" r="1.25" fill="#2a1a1a"/><circle cx="13.8" cy="12.0" r="1.25" fill="#5a1818"/><circle cx="17.099999999999998" cy="12.0" r="1.25" fill="#901818"/><circle cx="20.4" cy="12.0" r="1.25" fill="#b01c1c"/><circle cx="7.2" cy="15.399999999999999" r="1.25" fill="#1a1a1a"/><circle cx="10.5" cy="15.399999999999999" r="1.25" fill="#2a1a1a"/><circle cx="13.8" cy="15.399999999999999" r="1.25" fill="#5a1818"/><circle cx="17.099999999999998" cy="15.399999999999999" r="1.25" fill="#901818"/><circle cx="20.4" cy="15.399999999999999" r="1.25" fill="#b01c1c"/><circle cx="7.2" cy="18.799999999999997" r="1.25" fill="#1a1a1a"/><circle cx="10.5" cy="18.799999999999997" r="1.25" fill="#2a1a1a"/><circle cx="13.8" cy="18.799999999999997" r="1.25" fill="#5a1818"/><circle cx="17.099999999999998" cy="18.799999999999997" r="1.25" fill="#901818"/><circle cx="20.4" cy="18.799999999999997" r="1.25" fill="#b01c1c"/></svg></div>
<div style="left:686px;top:231px;width:24px;height:24px"><svg width="24" height="24"><circle cx="6.5" cy="11.8" r="1.2" fill="#3a1a1a"/><circle cx="9.4" cy="11.8" r="1.2" fill="#3a1a1a"/><circle cx="12.3" cy="11.8" r="1.2" fill="#3a1a1a"/><circle cx="15.2" cy="11.8" r="1.2" fill="#3a1a1a"/><circle cx="18.1" cy="11.8" r="1.2" fill="#3a1a1a"/><circle cx="21.0" cy="11.8" r="1.2" fill="#3a1a1a"/></svg></div>
<div style="left:710px;top:231px;width:24px;height:24px"><svg width="24" height="24"><circle cx="11.8" cy="8.6" r="1.25" fill="#111"/><circle cx="11.8" cy="12.0" r="1.25" fill="#6a1818"/><circle cx="11.8" cy="15.399999999999999" r="1.25" fill="#901818"/><circle cx="11.8" cy="18.799999999999997" r="1.25" fill="#a01818"/></svg></div>
<div style="left:734px;top:231px;width:24px;height:24px"><svg width="24" height="24"><polygon points="4,12 8,8.5 11.5,10.5 16,6 20.5,9.5 20.5,20 4,20" fill="#e01414"/><polygon points="4,16 9,13 13,14.5 20.5,11 20.5,20.5 4,20.5" fill="#2a2a2a"/><polyline points="4,15.5 9,12.5 13,14 20.5,10.5" fill="none" stroke="#f4a0a0" stroke-width="1"/></svg></div>
<div style="left:758px;top:231px;width:24px;height:24px"><svg width="24" height="24"><g fill="none" stroke-width="1.1"><polyline points="4,9 8,7.5 13,7.5 18,7.5" stroke="#c02890"/><polyline points="4,13 8,12 13,12 18,12" stroke="#3040d0"/><polyline points="4,16.5 8,17 13,17.5 18,18.5" stroke="#e02040"/><polyline points="4,9 4,16.5 M8,7.5 8,17" stroke="#8080e0"/></g><path d="M4,9 V16.5 M8,7.5 V17 M13,7.5 V17.5 M18,7.5 V18.5" stroke="#9a9ae0" stroke-width=".8"/><circle cx="4" cy="9" r="1.3" fill="#c02890"/><circle cx="8" cy="7.5" r="1.3" fill="#c02890"/><circle cx="13" cy="7.5" r="1.3" fill="#c02890"/><circle cx="18" cy="7.5" r="1.3" fill="#c02890"/><circle cx="4" cy="13" r="1.3" fill="#2838c8"/><circle cx="8" cy="12" r="1.3" fill="#2838c8"/><circle cx="13" cy="12" r="1.3" fill="#2838c8"/><circle cx="18" cy="12.5" r="1.3" fill="#2838c8"/><circle cx="4" cy="16.5" r="1.3" fill="#e02040"/><circle cx="8" cy="17" r="1.3" fill="#e02040"/><circle cx="13" cy="17.5" r="1.3" fill="#e02040"/><circle cx="18" cy="18.5" r="1.3" fill="#e02040"/></svg></div>
<div style="left:719px;top:258px;width:60px;height:13px;background:linear-gradient(#f4f4f4,#e4e4e4);border:1px solid #8a8a8a;border-radius:1px"></div>
<div class="t" style="left:733px;top:261px;font-size:7px;color:#555;transform:scaleX(.9);transform-origin:0 0">Interp-Mode</div>
<div class="t" style="left:488px;top:258px;font-size:10px;color:#4a4a4a;transform:scaleX(.88);transform-origin:0 0">Flow Potential %</div>
<div class="c" style="left:267px;top:273px;background:#c1919c">0.00%</div><div class="c" style="left:299px;top:273px;background:#f6c4cf">3.13%</div><div class="c" style="left:331px;top:273px;background:#c1919c">6.25%</div><div class="c" style="left:363px;top:273px;background:#f6c4cf">12.50%</div><div class="c" style="left:395px;top:273px;background:#c1919c">18.75%</div><div class="c" style="left:427px;top:273px;background:#f6c4cf">25.00%</div><div class="c" style="left:459px;top:273px;background:#c1919c">37.50%</div><div class="c" style="left:491px;top:273px;background:#f6c4cf">50.00%</div><div class="c" style="left:523px;top:273px;background:#c1919c">62.50%</div><div class="c" style="left:555px;top:273px;background:#f6c4cf">75.00%</div><div class="c" style="left:587px;top:273px;background:#c1919c">84.38%</div><div class="c" style="left:619px;top:273px;background:#f6c4cf">87.50%</div><div class="c" style="left:651px;top:273px;background:#c1919c">90.63%</div><div class="c" style="left:683px;top:273px;background:#f6c4cf">93.75%</div><div class="c" style="left:715px;top:273px;background:#c1919c">96.88%</div><div class="c" style="left:747px;top:273px;background:#f6c4cf">100.00%</div><div class="c" style="left:235px;top:288px;background:#5e8fb3">0</div><div class="c" style="left:267px;top:288px;background:rgb(121,255,0)">7.50</div><div class="c" style="left:299px;top:288px;background:rgb(121,255,0)">7.50</div><div class="c" style="left:331px;top:288px;background:rgb(123,255,0)">8.50</div><div class="c" style="left:363px;top:288px;background:rgb(148,255,0)">31.10</div><div class="c" style="left:395px;top:288px;background:rgb(171,255,0)">51.70</div><div class="c" style="left:427px;top:288px;background:rgb(199,255,0)">76.40</div><div class="c" style="left:459px;top:288px;background:rgb(241,255,0)">113.20</div><div class="c" style="left:491px;top:288px;background:rgb(255,233,0)">145.60</div><div class="c" style="left:523px;top:288px;background:rgb(255,211,0)">165.00</div><div class="c" style="left:555px;top:288px;background:rgb(255,189,0)">184.00</div><div class="c" style="left:587px;top:288px;background:rgb(255,169,0)">201.40</div><div class="c" style="left:619px;top:288px;background:rgb(255,165,0)">205.70</div><div class="c" style="left:651px;top:288px;background:rgb(255,160,0)">210.00</div><div class="c" style="left:683px;top:288px;background:rgb(255,157,0)">212.00</div><div class="c" style="left:715px;top:288px;background:rgb(255,155,0)">214.20</div><div class="c" style="left:747px;top:288px;background:rgb(255,131,0)">235.30</div><div class="c" style="left:235px;top:304px;background:#8acbea">300</div><div class="c" style="left:267px;top:304px;background:rgb(121,255,0)">7.50</div><div class="c" style="left:299px;top:304px;background:rgb(121,255,0)">7.50</div><div class="c" style="left:331px;top:304px;background:rgb(123,255,0)">8.50</div><div class="c" style="left:363px;top:304px;background:rgb(148,255,0)">31.10</div><div class="c" style="left:395px;top:304px;background:rgb(171,255,0)">51.70</div><div class="c" style="left:427px;top:304px;background:rgb(199,255,0)">76.40</div><div class="c" style="left:459px;top:304px;background:rgb(241,255,0)">113.20</div><div class="c" style="left:491px;top:304px;background:rgb(255,233,0)">145.60</div><div class="c" style="left:523px;top:304px;background:rgb(255,211,0)">165.00</div><div class="c" style="left:555px;top:304px;background:rgb(255,189,0)">184.00</div><div class="c" style="left:587px;top:304px;background:rgb(255,169,0)">201.40</div><div class="c" style="left:619px;top:304px;background:rgb(255,165,0)">205.70</div><div class="c" style="left:651px;top:304px;background:rgb(255,160,0)">210.00</div><div class="c" style="left:683px;top:304px;background:rgb(255,157,0)">212.00</div><div class="c" style="left:715px;top:304px;background:rgb(255,155,0)">214.20</div><div class="c" style="left:747px;top:304px;background:rgb(255,131,0)">235.30</div><div class="c" style="left:235px;top:320px;background:#5e8fb3">400</div><div class="c" style="left:267px;top:320px;background:rgb(121,255,0)">7.50</div><div class="c" style="left:299px;top:320px;background:rgb(121,255,0)">7.50</div><div class="c" style="left:331px;top:320px;background:rgb(123,255,0)">8.50</div><div class="c" style="left:363px;top:320px;background:rgb(148,255,0)">31.10</div><div class="c" style="left:395px;top:320px;background:rgb(171,255,0)">51.70</div><div class="c" style="left:427px;top:320px;background:rgb(199,255,0)">76.40</div><div class="c" style="left:459px;top:320px;background:rgb(241,255,0)">113.20</div><div class="c" style="left:491px;top:320px;background:rgb(255,233,0)">145.60</div><div class="c" style="left:523px;top:320px;background:rgb(255,211,0)">165.00</div><div class="c" style="left:555px;top:320px;background:rgb(255,189,0)">184.00</div><div class="c" style="left:587px;top:320px;background:rgb(255,169,0)">201.40</div><div class="c" style="left:619px;top:320px;background:rgb(255,165,0)">205.70</div><div class="c" style="left:651px;top:320px;background:rgb(255,160,0)">210.00</div><div class="c" style="left:683px;top:320px;background:rgb(255,157,0)">212.00</div><div class="c" style="left:715px;top:320px;background:rgb(255,155,0)">214.20</div><div class="c" style="left:747px;top:320px;background:rgb(255,131,0)">235.30</div><div class="c" style="left:235px;top:336px;background:#8acbea">600</div><div class="c" style="left:267px;top:336px;background:rgb(121,255,0)">7.50</div><div class="c" style="left:299px;top:336px;background:rgb(121,255,0)">7.50</div><div class="c" style="left:331px;top:336px;background:rgb(123,255,0)">8.50</div><div class="c" style="left:363px;top:336px;background:rgb(148,255,0)">31.10</div><div class="c" style="left:395px;top:336px;background:rgb(171,255,0)">51.70</div><div class="c" style="left:427px;top:336px;background:rgb(199,255,0)">76.40</div><div class="c" style="left:459px;top:336px;background:rgb(241,255,0)">113.20</div><div class="c" style="left:491px;top:336px;background:rgb(255,233,0)">145.60</div><div class="c" style="left:523px;top:336px;background:rgb(255,211,0)">165.00</div><div class="c" style="left:555px;top:336px;background:rgb(255,189,0)">184.00</div><div class="c" style="left:587px;top:336px;background:rgb(255,169,0)">201.40</div><div class="c" style="left:619px;top:336px;background:rgb(255,165,0)">205.70</div><div class="c" style="left:651px;top:336px;background:rgb(255,160,0)">210.00</div><div class="c" style="left:683px;top:336px;background:rgb(255,157,0)">212.00</div><div class="c" style="left:715px;top:336px;background:rgb(255,155,0)">214.20</div><div class="c" style="left:747px;top:336px;background:rgb(255,131,0)">235.30</div><div class="c" style="left:235px;top:352px;background:#5e8fb3">800</div><div class="c" style="left:267px;top:352px;background:rgb(121,255,0)">7.50</div><div class="c" style="left:299px;top:352px;background:rgb(121,255,0)">7.50</div><div class="c" style="left:331px;top:352px;background:rgb(123,255,0)">8.50</div><div class="c" style="left:363px;top:352px;background:rgb(148,255,0)">31.10</div><div class="c" style="left:395px;top:352px;background:rgb(171,255,0)">51.70</div><div class="c" style="left:427px;top:352px;background:rgb(199,255,0)">76.40</div><div class="c" style="left:459px;top:352px;background:rgb(241,255,0)">113.20</div><div class="c" style="left:491px;top:352px;background:rgb(255,233,0)">145.60</div><div class="c" style="left:523px;top:352px;background:rgb(255,211,0)">165.00</div><div class="c" style="left:555px;top:352px;background:rgb(255,189,0)">184.00</div><div class="c" style="left:587px;top:352px;background:rgb(255,169,0)">201.40</div><div class="c" style="left:619px;top:352px;background:rgb(255,165,0)">205.70</div><div class="c" style="left:651px;top:352px;background:rgb(255,160,0)">210.00</div><div class="c" style="left:683px;top:352px;background:rgb(255,157,0)">212.00</div><div class="c" style="left:715px;top:352px;background:rgb(255,155,0)">214.20</div><div class="c" style="left:747px;top:352px;background:rgb(255,131,0)">235.30</div><div class="c" style="left:235px;top:368px;background:#8acbea">1200</div><div class="c" style="left:267px;top:368px;background:rgb(81,255,0)">-28.00</div><div class="c" style="left:299px;top:368px;background:rgb(97,255,0)">-14.20</div><div class="c" style="left:331px;top:368px;background:rgb(113,255,0)">0.00</div><div class="c" style="left:363px;top:368px;background:rgb(138,255,0)">22.30</div><div class="c" style="left:395px;top:368px;background:rgb(167,255,0)">47.40</div><div class="c" style="left:427px;top:368px;background:rgb(194,255,0)">71.30</div><div class="c" style="left:459px;top:368px;background:rgb(241,255,0)">113.00</div><div class="c" style="left:491px;top:368px;background:rgb(255,229,0)">148.70</div><div class="c" style="left:523px;top:368px;background:rgb(255,191,0)">182.00</div><div class="c" style="left:555px;top:368px;background:rgb(255,147,0)">221.00</div><div class="c" style="left:587px;top:368px;background:rgb(255,130,0)">236.50</div><div class="c" style="left:619px;top:368px;background:rgb(255,122,0)">243.00</div><div class="c" style="left:651px;top:368px;background:rgb(255,109,0)">255.00</div><div class="c" style="left:683px;top:368px;background:rgb(255,109,0)">255.00</div><div class="c" style="left:715px;top:368px;background:rgb(255,106,0)">257.70</div><div class="c" style="left:747px;top:368px;background:rgb(255,79,0)">281.40</div><div class="c" style="left:235px;top:384px;background:#5e8fb3">1600</div><div class="c" style="left:267px;top:384px;background:rgb(51,255,0)">-54.60</div><div class="c" style="left:299px;top:384px;background:rgb(81,255,0)">-28.00</div><div class="c" style="left:331px;top:384px;background:rgb(108,255,0)">-4.80</div><div class="c" style="left:363px;top:384px;background:rgb(136,255,0)">20.00</div><div class="c" style="left:395px;top:384px;background:rgb(165,255,0)">45.60</div><div class="c" style="left:427px;top:384px;background:rgb(191,255,0)">68.80</div><div class="c" style="left:459px;top:384px;background:rgb(241,255,0)">113.00</div><div class="c" style="left:491px;top:384px;background:rgb(255,230,0)">148.00</div><div class="c" style="left:523px;top:384px;background:rgb(255,188,0)">184.60</div><div class="c" style="left:555px;top:384px;background:rgb(255,146,0)">222.30</div><div class="c" style="left:587px;top:384px;background:rgb(255,121,0)">244.50</div><div class="c" style="left:619px;top:384px;background:rgb(255,114,0)">250.30</div><div class="c" style="left:651px;top:384px;background:rgb(255,107,0)">256.70</div><div class="c" style="left:683px;top:384px;background:rgb(255,98,0)">264.30</div><div class="c" style="left:715px;top:384px;background:rgb(255,86,0)">275.00</div><div class="c" style="left:747px;top:384px;background:rgb(255,77,0)">283.30</div><div class="c" style="left:235px;top:400px;background:#8acbea">2000</div><div class="c" style="left:267px;top:400px;background:rgb(45,255,0)">-60.10</div><div class="c" style="left:299px;top:400px;background:rgb(76,255,0)">-33.10</div><div class="c" style="left:331px;top:400px;background:rgb(106,255,0)">-6.20</div><div class="c" style="left:363px;top:400px;background:rgb(136,255,0)">20.80</div><div class="c" style="left:395px;top:400px;background:rgb(167,255,0)">47.80</div><div class="c" style="left:427px;top:400px;background:rgb(195,255,0)">72.60</div><div class="c" style="left:459px;top:400px;background:rgb(251,255,0)">122.00</div><div class="c" style="left:491px;top:400px;background:rgb(255,208,0)">167.60</div><div class="c" style="left:523px;top:400px;background:rgb(255,169,0)">202.00</div><div class="c" style="left:555px;top:400px;background:rgb(255,132,0)">235.00</div><div class="c" style="left:587px;top:400px;background:rgb(255,111,0)">253.00</div><div class="c" style="left:619px;top:400px;background:rgb(255,101,0)">262.00</div><div class="c" style="left:651px;top:400px;background:rgb(255,91,0)">271.00</div><div class="c" style="left:683px;top:400px;background:rgb(255,75,0)">285.20</div><div class="c" style="left:715px;top:400px;background:rgb(255,71,0)">288.40</div><div class="c" style="left:747px;top:400px;background:rgb(255,50,0)">307.00</div><div class="c" style="left:235px;top:416px;background:#5e8fb3">2400</div><div class="c" style="left:267px;top:416px;background:rgb(42,255,0)">-62.60</div><div class="c" style="left:299px;top:416px;background:rgb(75,255,0)">-34.00</div><div class="c" style="left:331px;top:416px;background:rgb(104,255,0)">-8.00</div><div class="c" style="left:363px;top:416px;background:rgb(139,255,0)">23.10</div><div class="c" style="left:395px;top:416px;background:rgb(171,255,0)">51.60</div><div class="c" style="left:427px;top:416px;background:rgb(200,255,0)">77.40</div><div class="c" style="left:459px;top:416px;background:rgb(255,247,0)">133.00</div><div class="c" style="left:491px;top:416px;background:rgb(255,196,0)">177.70</div><div class="c" style="left:523px;top:416px;background:rgb(255,155,0)">214.40</div><div class="c" style="left:555px;top:416px;background:rgb(255,118,0)">247.00</div><div class="c" style="left:587px;top:416px;background:rgb(255,89,0)">272.50</div><div class="c" style="left:619px;top:416px;background:rgb(255,79,0)">281.70</div><div class="c" style="left:651px;top:416px;background:rgb(255,75,0)">284.60</div><div class="c" style="left:683px;top:416px;background:rgb(255,57,0)">301.00</div><div class="c" style="left:715px;top:416px;background:rgb(255,50,0)">307.00</div><div class="c" style="left:747px;top:416px;background:rgb(255,26,0)">328.40</div><div class="c" style="left:235px;top:432px;background:#8acbea">2800</div><div class="c" style="left:267px;top:432px;background:rgb(43,255,0)">-62.00</div><div class="c" style="left:299px;top:432px;background:rgb(75,255,0)">-33.70</div><div class="c" style="left:331px;top:432px;background:rgb(108,255,0)">-4.40</div><div class="c" style="left:363px;top:432px;background:rgb(141,255,0)">24.80</div><div class="c" style="left:395px;top:432px;background:rgb(174,255,0)">54.10</div><div class="c" style="left:427px;top:432px;background:rgb(207,255,0)">83.30</div><div class="c" style="left:459px;top:432px;background:rgb(255,243,0)">136.30</div><div class="c" style="left:491px;top:432px;background:rgb(255,196,0)">178.10</div><div class="c" style="left:523px;top:432px;background:rgb(255,154,0)">215.20</div><div class="c" style="left:555px;top:432px;background:rgb(255,120,0)">244.80</div><div class="c" style="left:587px;top:432px;background:rgb(255,94,0)">268.60</div><div class="c" style="left:619px;top:432px;background:rgb(255,77,0)">283.30</div><div class="c" style="left:651px;top:432px;background:rgb(255,68,0)">291.10</div><div class="c" style="left:683px;top:432px;background:rgb(255,52,0)">305.30</div><div class="c" style="left:715px;top:432px;background:rgb(255,38,0)">318.00</div><div class="c" style="left:747px;top:432px;background:rgb(255,32,0)">323.00</div><div class="c" style="left:235px;top:448px;background:#5e8fb3">3200</div><div class="c" style="left:267px;top:448px;background:rgb(41,255,0)">-63.40</div><div class="c" style="left:299px;top:448px;background:rgb(73,255,0)">-35.00</div><div class="c" style="left:331px;top:448px;background:rgb(104,255,0)">-7.60</div><div class="c" style="left:363px;top:448px;background:rgb(136,255,0)">20.40</div><div class="c" style="left:395px;top:448px;background:rgb(168,255,0)">48.30</div><div class="c" style="left:427px;top:448px;background:rgb(205,255,0)">81.70</div><div class="c" style="left:459px;top:448px;background:rgb(255,247,0)">133.20</div><div class="c" style="left:491px;top:448px;background:rgb(255,197,0)">177.00</div><div class="c" style="left:523px;top:448px;background:rgb(255,152,0)">216.70</div><div class="c" style="left:555px;top:448px;background:rgb(255,121,0)">244.10</div><div class="c" style="left:587px;top:448px;background:rgb(255,89,0)">273.00</div><div class="c" style="left:619px;top:448px;background:rgb(255,74,0)">285.70</div><div class="c" style="left:651px;top:448px;background:rgb(255,61,0)">297.00</div><div class="c" style="left:683px;top:448px;background:rgb(255,50,0)">307.00</div><div class="c" style="left:715px;top:448px;background:rgb(255,43,0)">313.00</div><div class="c" style="left:747px;top:448px;background:rgb(255,24,0)">330.30</div><div class="c" style="left:235px;top:464px;background:#8acbea">3600</div><div class="c" style="left:267px;top:464px;background:rgb(48,255,0)">-57.20</div><div class="c" style="left:299px;top:464px;background:rgb(78,255,0)">-31.00</div><div class="c" style="left:331px;top:464px;background:rgb(108,255,0)">-4.70</div><div class="c" style="left:363px;top:464px;background:rgb(137,255,0)">21.00</div><div class="c" style="left:395px;top:464px;background:rgb(167,255,0)">47.70</div><div class="c" style="left:427px;top:464px;background:rgb(201,255,0)">77.70</div><div class="c" style="left:459px;top:464px;background:rgb(255,249,0)">130.60</div><div class="c" style="left:491px;top:464px;background:rgb(255,203,0)">172.00</div><div class="c" style="left:523px;top:464px;background:rgb(255,164,0)">206.00</div><div class="c" style="left:555px;top:464px;background:rgb(255,120,0)">245.30</div><div class="c" style="left:587px;top:464px;background:rgb(255,84,0)">277.00</div><div class="c" style="left:619px;top:464px;background:rgb(255,71,0)">288.70</div><div class="c" style="left:651px;top:464px;background:rgb(255,53,0)">304.30</div><div class="c" style="left:683px;top:464px;background:rgb(255,41,0)">315.00</div><div class="c" style="left:715px;top:464px;background:rgb(255,34,0)">321.70</div><div class="c" style="left:747px;top:464px;background:rgb(255,14,0)">338.80</div><div class="c" style="left:235px;top:480px;background:#5e8fb3">4000</div><div class="c" style="left:267px;top:480px;background:rgb(45,255,0)">-60.00</div><div class="c" style="left:299px;top:480px;background:rgb(74,255,0)">-34.70</div><div class="c" style="left:331px;top:480px;background:rgb(104,255,0)">-8.00</div><div class="c" style="left:363px;top:480px;background:rgb(133,255,0)">17.60</div><div class="c" style="left:395px;top:480px;background:rgb(162,255,0)">43.80</div><div class="c" style="left:427px;top:480px;background:rgb(194,255,0)">72.10</div><div class="c" style="left:459px;top:480px;background:rgb(252,255,0)">123.20</div><div class="c" style="left:491px;top:480px;background:rgb(255,207,0)">168.00</div><div class="c" style="left:523px;top:480px;background:rgb(255,164,0)">206.10</div><div class="c" style="left:555px;top:480px;background:rgb(255,120,0)">245.10</div><div class="c" style="left:587px;top:480px;background:rgb(255,79,0)">281.40</div><div class="c" style="left:619px;top:480px;background:rgb(255,61,0)">297.00</div><div class="c" style="left:651px;top:480px;background:rgb(255,41,0)">315.30</div><div class="c" style="left:683px;top:480px;background:rgb(255,40,0)">316.00</div><div class="c" style="left:715px;top:480px;background:rgb(255,32,0)">323.00</div><div class="c" style="left:747px;top:480px;background:rgb(255,11,0)">342.00</div><div class="c" style="left:235px;top:496px;background:#8acbea">4400</div><div class="c" style="left:267px;top:496px;background:rgb(36,255,0)">-68.00</div><div class="c" style="left:299px;top:496px;background:rgb(65,255,0)">-42.20</div><div class="c" style="left:331px;top:496px;background:rgb(96,255,0)">-15.40</div><div class="c" style="left:363px;top:496px;background:rgb(126,255,0)">11.30</div><div class="c" style="left:395px;top:496px;background:rgb(156,255,0)">38.00</div><div class="c" style="left:427px;top:496px;background:rgb(187,255,0)">65.10</div><div class="c" style="left:459px;top:496px;background:rgb(251,255,0)">122.30</div><div class="c" style="left:491px;top:496px;background:rgb(255,212,0)">164.10</div><div class="c" style="left:523px;top:496px;background:rgb(255,163,0)">207.30</div><div class="c" style="left:555px;top:496px;background:rgb(255,111,0)">253.00</div><div class="c" style="left:587px;top:496px;background:rgb(255,78,0)">282.70</div><div class="c" style="left:619px;top:496px;background:rgb(255,52,0)">305.10</div><div class="c" style="left:651px;top:496px;background:rgb(255,42,0)">314.00</div><div class="c" style="left:683px;top:496px;background:rgb(255,33,0)">322.00</div><div class="c" style="left:715px;top:496px;background:rgb(255,23,0)">331.00</div><div class="c" style="left:747px;top:496px;background:rgb(255,0,0)">351.40</div><div class="c" style="left:235px;top:512px;background:#5e8fb3">5200</div><div class="c" style="left:267px;top:512px;background:rgb(0,255,0)">-100.00</div><div class="c" style="left:299px;top:512px;background:rgb(29,255,0)">-74.10</div><div class="c" style="left:331px;top:512px;background:rgb(61,255,0)">-46.00</div><div class="c" style="left:363px;top:512px;background:rgb(109,255,0)">-3.10</div><div class="c" style="left:395px;top:512px;background:rgb(146,255,0)">29.10</div><div class="c" style="left:427px;top:512px;background:rgb(179,255,0)">58.20</div><div class="c" style="left:459px;top:512px;background:rgb(241,255,0)">113.20</div><div class="c" style="left:491px;top:512px;background:rgb(255,217,0)">159.00</div><div class="c" style="left:523px;top:512px;background:rgb(255,170,0)">201.20</div><div class="c" style="left:555px;top:512px;background:rgb(255,119,0)">246.20</div><div class="c" style="left:587px;top:512px;background:rgb(255,71,0)">288.70</div><div class="c" style="left:619px;top:512px;background:rgb(255,63,0)">295.30</div><div class="c" style="left:651px;top:512px;background:rgb(255,51,0)">306.00</div><div class="c" style="left:683px;top:512px;background:rgb(255,43,0)">313.00</div><div class="c" style="left:715px;top:512px;background:rgb(255,31,0)">324.00</div><div class="c" style="left:747px;top:512px;background:rgb(255,9,0)">343.00</div><div class="c" style="left:235px;top:528px;background:#8acbea">6000</div><div class="c" style="left:267px;top:528px;background:rgb(16,255,0)">-85.70</div><div class="c" style="left:299px;top:528px;background:rgb(36,255,0)">-68.20</div><div class="c" style="left:331px;top:528px;background:rgb(59,255,0)">-48.00</div><div class="c" style="left:363px;top:528px;background:rgb(93,255,0)">-18.10</div><div class="c" style="left:395px;top:528px;background:rgb(130,255,0)">15.40</div><div class="c" style="left:427px;top:528px;background:rgb(168,255,0)">48.60</div><div class="c" style="left:459px;top:528px;background:rgb(226,255,0)">100.10</div><div class="c" style="left:491px;top:528px;background:rgb(255,232,0)">146.30</div><div class="c" style="left:523px;top:528px;background:rgb(255,181,0)">191.00</div><div class="c" style="left:555px;top:528px;background:rgb(255,126,0)">240.00</div><div class="c" style="left:587px;top:528px;background:rgb(255,89,0)">273.00</div><div class="c" style="left:619px;top:528px;background:rgb(255,80,0)">281.00</div><div class="c" style="left:651px;top:528px;background:rgb(255,73,0)">286.70</div><div class="c" style="left:683px;top:528px;background:rgb(255,65,0)">294.00</div><div class="c" style="left:715px;top:528px;background:rgb(255,44,0)">312.30</div><div class="c" style="left:747px;top:528px;background:rgb(255,32,0)">323.00</div>
<div style="left:235px;top:288px;width:545px;height:257px;border:1px solid #222;background:transparent"></div>
<div style="left:266px;top:287px;width:35px;height:19px;border:1.5px solid #111;border-radius:2px;box-shadow:inset 0 0 0 1px #e8e8e8,inset 0 0 0 2.5px #111"></div>
<div style="left:287px;top:278px;width:12px;height:16px"><svg width="12" height="16"><polygon points="0.5,0.5 0.5,12 3.5,9.5 6,14.5 8,13.5 5.5,9 9.5,9 " fill="#fff" stroke="#222" stroke-width="1"/></svg></div>
<div class="t" style="left:221.5px;top:448px;font-size:10px;color:#4a4a4a;transform:rotate(-90deg) scaleX(.86);transform-origin:0 0">Rotations Per Minute</div>
<div class="t" style="left:412px;top:548px;font-size:10px;color:#3a3a3a;transform:scaleX(.89);transform-origin:0 0">Estimated Torque Delivered (Newton Meters)</div>
<div style="left:220px;top:560px;width:560px;height:11px;background:linear-gradient(90deg,#00ff00 0%,#ffff00 50%,#ff0000 100%);box-shadow:inset 0 1px 0 rgba(0,0,0,.25),inset 1px 0 0 rgba(0,0,0,.2)"></div>
<div style="left:64px;top:686px;width:1137px;height:2px;background:#e4e4e4"></div>
<div style="left:64px;top:688px;width:1152px;height:32px;background:#10141a"></div>
<div style="left:64px;top:688px;width:38px;height:32px;background:#07090b"></div>
<div style="left:102px;top:688px;width:276px;height:32px;background:#f2f2f2"></div>
<div style="left:76px;top:697px;width:14px;height:14px"><svg width="14" height="14"><polygon points="0,2 6,1.2 6,6.5 0,6.5" fill="#fff"/><polygon points="7,1 14,0 14,6.5 7,6.5" fill="#fff"/><polygon points="0,7.5 6,7.5 6,12.8 0,12" fill="#fff"/><polygon points="7,7.5 14,7.5 14,14 7,13" fill="#fff"/></svg></div>
<div style="left:110px;top:696px;width:17px;height:17px;border:2.5px solid #1a1a1a;border-radius:50%"></div>
<div class="t" style="left:135px;top:698.5px;font-size:12.5px;color:#5a5a5a;transform:scaleX(.86);transform-origin:0 0">Type here to search</div>
<div style="left:355px;top:695px;width:12px;height:18px"><svg width="12" height="18"><rect x="3.5" y="1.5" width="5" height="9" rx="2.5" fill="none" stroke="#666" stroke-width="1.3"/><path d="M1.5,8 Q1.5,13 6,13 Q10.5,13 10.5,8 M6,13 L6,16" fill="none" stroke="#666" stroke-width="1.2"/></svg></div>
<div style="left:389px;top:696px;width:16px;height:16px"><svg width="16" height="16"><rect x="3.5" y="2.5" width="9" height="11" fill="none" stroke="#e0e0e0" stroke-width="1.6"/><path d="M1,3 L1,13 M15,3 L15,13" stroke="#e0e0e0" stroke-width="1.5"/><rect x="4" y="6" width="8" height="1.5" fill="#e0e0e0"/></svg></div>
<div style="left:428px;top:694px;width:20px;height:20px"><svg width="20" height="20"><path d="M17.5,11.5 L5,11.5 Q5.5,16 10.5,16 Q14,16 17,14 L17,17.2 Q14,18.8 10,18.8 Q2,18.5 2,10.5 Q2,2.5 10,2 Q17.8,2 17.5,11.5 Z M5.2,8.8 L13.8,8.8 Q13.5,5 9.6,5 Q6,5.2 5.2,8.8 Z" fill="#1e7ad8" fill-rule="evenodd"/></svg></div>
<div style="left:467px;top:696px;width:20px;height:16px"><svg width="20" height="16"><path d="M1,2 L7,2 L9,4 L19,4 L19,15 L1,15 Z" fill="#f4cf58"/><rect x="1" y="6" width="18" height="9" fill="#fbe28c"/><rect x="6" y="9" width="8" height="5" fill="#4a9ad8"/></svg></div>
<div style="left:497px;top:688px;width:38px;height:32px;background:#3a3d42"></div>
<div style="left:497px;top:718px;width:38px;height:2px;background:#8ab8e8"></div>
<div style="left:506px;top:695px;width:20px;height:17px"><svg width="20" height="17"><rect x="1" y="1" width="18" height="15" fill="#2a2a2a"/><rect x="3" y="3" width="14" height="11" fill="#e01818"/><path d="M3,8 L17,5 L17,3 L3,3 Z" fill="#f05050"/></svg></div>
<div style="left:1016px;top:696px;width:16px;height:16px"><svg width="16" height="16" fill="none" stroke="#e8e8e8" stroke-width="1.3"><circle cx="10.5" cy="4.5" r="2.8"/><path d="M6,11 Q7,7.5 10.5,7.5 Q14.5,7.5 15,12"/><circle cx="5" cy="8" r="2.5"/><path d="M1,15 Q1.5,11 5,11 Q8.5,11 9,15"/></svg></div>
<div style="left:1046px;top:699px;width:13px;height:8px"><svg width="13" height="8"><polyline points="1,7 6.5,1.5 12,7" fill="none" stroke="#e8e8e8" stroke-width="1.4"/></svg></div>
<div style="left:1064px;top:698px;width:16px;height:12px"><svg width="16" height="12"><rect x="3" y="3" width="12" height="7" fill="#e0e0e0" stroke="#e0e0e0"/><rect x="1" y="1" width="4" height="3" fill="#e0e0e0"/></svg></div>
<div style="left:1084px;top:697px;width:16px;height:15px"><svg width="16" height="15" fill="none" stroke="#e0e0e0" stroke-width="1.3"><rect x="3.5" y="1.5" width="11" height="8"/><path d="M1,3 L1,9 M8,10 L8,13 M5,13.5 L12,13.5"/></svg></div>
<div style="left:1102px;top:697px;width:15px;height:14px"><svg width="15" height="14" fill="none" stroke="#e0e0e0" stroke-width="1.3"><path d="M1,5 L4,5 L8,1.5 L8,12.5 L4,9 L1,9 Z"/><path d="M10,5 Q11.5,7 10,9 M12,3 Q15,7 12,11"/></svg></div>
<div class="t" style="left:1110px;top:692px;width:72px;text-align:center;font-size:11.5px;color:#f0f0f0;transform:scaleX(.86)">8:52 PM</div>
<div class="t" style="left:1110px;top:706.5px;width:72px;text-align:center;font-size:11.5px;color:#f0f0f0;transform:scaleX(.86)">3/19/2019</div>
<div style="left:1182px;top:696px;width:17px;height:16px"><svg width="17" height="16" fill="none" stroke="#e8e8e8" stroke-width="1.3"><path d="M1.5,1.5 L15.5,1.5 L15.5,11 L10,11 L7.5,14 L7.5,11 L1.5,11 Z"/></svg></div>
<div style="left:1213px;top:688px;width:1px;height:32px;background:#3a3a3a"></div></body></html>
